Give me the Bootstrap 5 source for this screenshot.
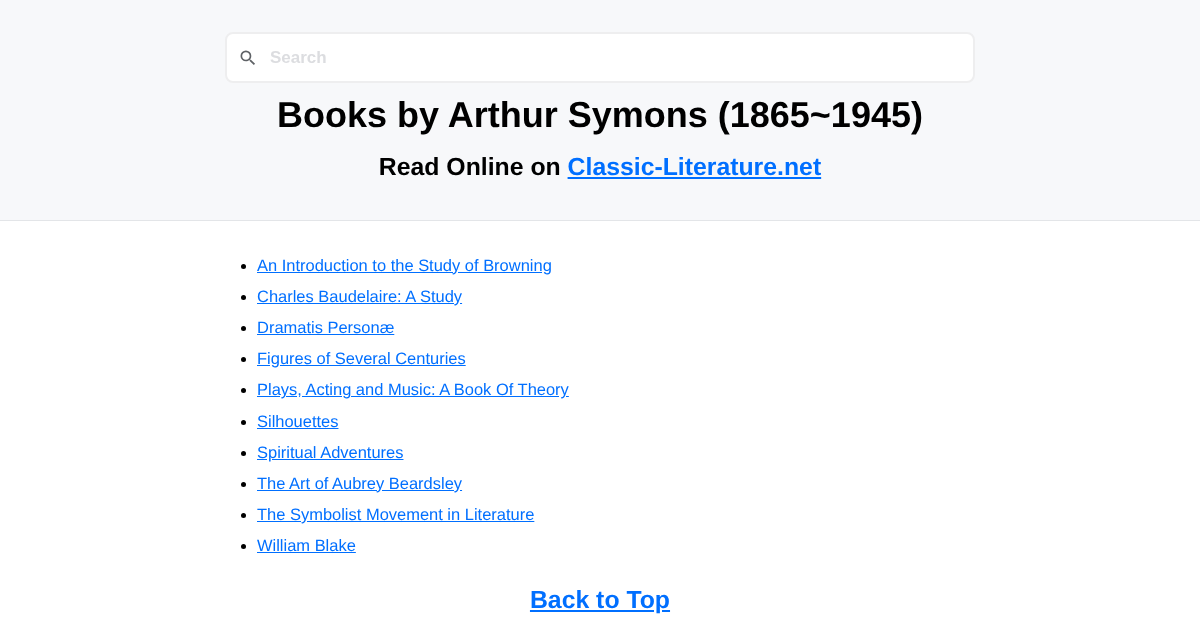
<!DOCTYPE html>
<html lang="en"><head><meta charset="utf-8">
<link href="https://cdn.jsdelivr.net/npm/bootstrap@5.3.0/dist/css/bootstrap.min.css" rel="stylesheet">
<style>
body{font-family:"Liberation Sans",Arial,sans-serif;color:#000;font-size:16.48px;text-rendering:geometricPrecision;-webkit-font-smoothing:antialiased}
a{color:#006fff}
.pagewrap{will-change:transform}
.topband{background:#f7f8fa;border-bottom:1px solid #e3e5e8;height:221px;padding-top:32px}
.searchwrap{width:750px}
.searchbox{height:51px;border:2px solid #eeeeef;border-radius:8px;background:#fff;padding-left:11px;gap:10px}
.searchbox svg{flex:none}
.searchbox input{border:0;outline:0;flex:1;font-size:17px;font-weight:700;font-family:inherit;background:transparent}
.searchbox input::placeholder{color:#dcdde0;opacity:1}
.maintitle{font-size:36px;font-weight:700;line-height:43px;margin:10px 0 0;color:#000}
.subtitle{font-size:24.8px;font-weight:700;line-height:31px;margin:16px 0 0;color:#000}
.booklist{width:750px;padding:34.8px 0 0 32px;margin:0;list-style:disc}
.booklist li{line-height:20px;margin-bottom:11.15px}
.backtop{font-size:24.8px;font-weight:700;line-height:31px;margin-top:29px}
</style></head><body>
<div class="pagewrap">
<div class="topband text-center">
<div class="searchwrap mx-auto">
<div class="searchbox d-flex align-items-center">
<svg width="20" height="20" viewBox="0 0 24 24" fill="#5f6266"><path d="M15.5 14h-.79l-.28-.27A6.47 6.47 0 0 0 16 9.5 6.5 6.5 0 1 0 9.5 16c1.61 0 3.09-.59 4.23-1.57l.27.28v.79l5 4.99L20.49 19l-4.99-5zm-6 0C7.01 14 5 11.99 5 9.5S7.01 5 9.5 5 14 7.01 14 9.5 11.99 14 9.5 14z"/></svg>
<input type="text" placeholder="Search">
</div>
</div>
<h1 class="maintitle">Books by Arthur Symons (1865~1945)</h1>
<h2 class="subtitle">Read Online on <a href="#">Classic-Literature.net</a></h2>
</div>
<ul class="booklist mx-auto">
<li><a href="#">An Introduction to the Study of Browning</a></li>
<li><a href="#">Charles Baudelaire: A Study</a></li>
<li><a href="#">Dramatis Personæ</a></li>
<li><a href="#">Figures of Several Centuries</a></li>
<li><a href="#">Plays, Acting and Music: A Book Of Theory</a></li>
<li><a href="#">Silhouettes</a></li>
<li><a href="#">Spiritual Adventures</a></li>
<li><a href="#">The Art of Aubrey Beardsley</a></li>
<li><a href="#">The Symbolist Movement in Literature</a></li>
<li><a href="#">William Blake</a></li>
</ul>
<div class="backtop text-center"><a href="#">Back to Top</a></div>
</div>
</body></html>
